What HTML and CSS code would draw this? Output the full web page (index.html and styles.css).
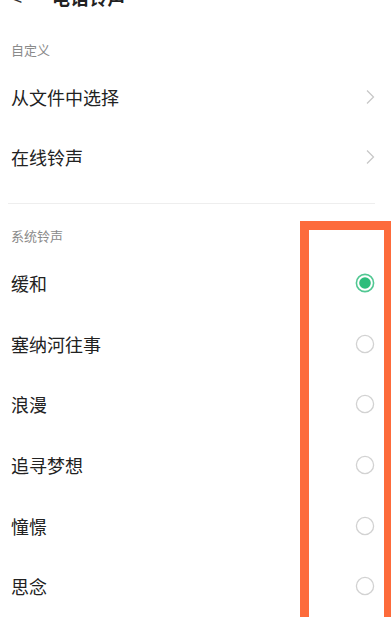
FILE: index.html
```html
<!DOCTYPE html>
<html lang="zh-CN">
<head>
  <meta charset="UTF-8" />
  <meta name="viewport" content="width=device-width, initial-scale=1.0"/>
  <title>电话铃声</title>
  <link rel="stylesheet" href="styles.css">
</head>
<body>

  <header class="topbar">
    <span class="back">&lt;</span>
    <h1>电话铃声</h1>
  </header>

  <!-- 自定义 -->
  <div class="group-label first">自定义</div>
  <div class="row">
    <span>从文件中选择</span>
    <svg class="chevron" width="10" height="16" viewBox="0 0 10 16"><path d="M2 1.5 L8.5 8 L2 14.5" fill="none" stroke="#c8c8c8" stroke-width="1.3"/></svg>
  </div>
  <div class="row">
    <span>在线铃声</span>
    <svg class="chevron" width="10" height="16" viewBox="0 0 10 16"><path d="M2 1.5 L8.5 8 L2 14.5" fill="none" stroke="#c8c8c8" stroke-width="1.3"/></svg>
  </div>

  <div class="divider"></div>

  <!-- 系统铃声 -->
  <div class="group-label">系统铃声</div>
  <div class="list">
    <div class="row ring">
      <span>缓和</span>
      <svg width="20" height="20" viewBox="0 0 20 20"><circle cx="10" cy="10" r="8.6" fill="none" stroke="#52c893" stroke-width="1.6"/><circle cx="10" cy="10" r="5.8" fill="#2dbd7b"/></svg>
    </div>
    <div class="row ring">
      <span>塞纳河往事</span>
      <svg width="20" height="20" viewBox="0 0 20 20"><circle cx="10" cy="10" r="8.6" fill="none" stroke="#d2d2d2" stroke-width="1.3"/></svg>
    </div>
    <div class="row ring">
      <span>浪漫</span>
      <svg width="20" height="20" viewBox="0 0 20 20"><circle cx="10" cy="10" r="8.6" fill="none" stroke="#d2d2d2" stroke-width="1.3"/></svg>
    </div>
    <div class="row ring">
      <span>追寻梦想</span>
      <svg width="20" height="20" viewBox="0 0 20 20"><circle cx="10" cy="10" r="8.6" fill="none" stroke="#d2d2d2" stroke-width="1.3"/></svg>
    </div>
    <div class="row ring">
      <span>憧憬</span>
      <svg width="20" height="20" viewBox="0 0 20 20"><circle cx="10" cy="10" r="8.6" fill="none" stroke="#d2d2d2" stroke-width="1.3"/></svg>
    </div>
    <div class="row ring">
      <span>思念</span>
      <svg width="20" height="20" viewBox="0 0 20 20"><circle cx="10" cy="10" r="8.6" fill="none" stroke="#d2d2d2" stroke-width="1.3"/></svg>
    </div>

    <div class="highlight"></div>
  </div>

</body>
</html>
```

FILE: styles.css
```css
body {
  font-family: "Noto Sans CJK SC", "Noto Sans", sans-serif;
  margin: 0;
  padding: 0;
  background-color: #ffffff;
  color: #222222;
  overflow: hidden;
}

.topbar {
  display: flex;
  align-items: center;
  height: 34px;
  margin-top: -20px;
  padding-left: 11px;
}

.topbar .back {
  font-size: 20px;
  color: #333;
  width: 41px;
}

.topbar h1 {
  margin: 0;
  font-size: 18px;
  font-weight: bold;
  letter-spacing: 0.5px;
}

.group-label {
  height: 34px;
  line-height: 34px;
  padding: 15px 0 0 11px;
  font-size: 13px;
  color: #8a8a8a;
}

.group-label.first {
  padding-top: 19px;
}

.row {
  display: flex;
  align-items: center;
  justify-content: space-between;
  height: 60px;
  padding: 0 16px 0 11px;
  font-size: 18px;
}

.row.ring {
  height: 60.6px;
}

.chevron {
  margin-right: 0;
}

.divider {
  height: 1px;
  background-color: #eeeeee;
  margin: 16px 16px 0 8px;
}

.list {
  position: relative;
}

.highlight {
  position: absolute;
  left: 300px;
  top: -32px;
  width: 93px;
  height: 460px;
  box-sizing: border-box;
  border: 9.5px solid #fd6b3b;
}
```
